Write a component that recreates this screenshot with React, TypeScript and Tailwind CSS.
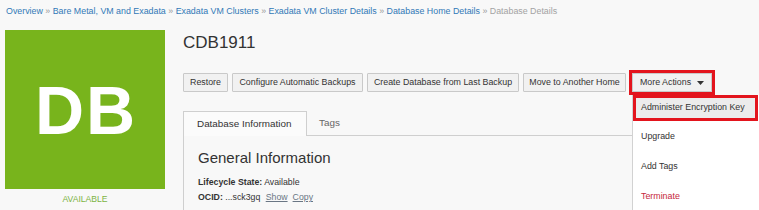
import React from 'react'

const crumbs = ['Overview', 'Bare Metal, VM and Exadata', 'Exadata VM Clusters', 'Exadata VM Cluster Details', 'Database Home Details']

const actions = [
  { label: 'Restore', w: 'w-[45px]' },
  { label: 'Configure Automatic Backups', w: 'w-[131px]' },
  { label: 'Create Database from Last Backup', w: 'w-[152px]' },
  { label: 'Move to Another Home', w: 'w-[103px]' },
]

export default function App() {
  return (
    <div className="w-[759px] h-[210px] overflow-hidden bg-[#f8f8f8] text-[#333] font-['Liberation_Sans',Arial,sans-serif]">
      {/* Breadcrumb */}
      <div className="pt-[4px] pl-[6px] text-[8.85px] leading-[14px] whitespace-nowrap">
        {crumbs.map((c) => (
          <span key={c}>
            <span className="text-[#3279b7]">{c}</span>
            <span className="text-[#9a9a9a]"> » </span>
          </span>
        ))}
        <span className="text-[#a3a3a3]">Database Details</span>
      </div>

      <div className="flex mt-[12px]">
        {/* Status tile */}
        <div className="ml-[5px] w-[160px] shrink-0">
          <div className="h-[159px] bg-[#78b41c] flex items-center justify-center">
            <span className="text-white font-bold text-[68px] leading-none tracking-[2px] pl-[2px]">DB</span>
          </div>
          <div className="mt-[4px] text-center text-[8.6px] leading-[12px] text-[#7cb443]">AVAILABLE</div>
        </div>

        {/* Details */}
        <div className="ml-[18px] flex-1">
          <h1 className="mt-[3px] text-[17px] leading-[20px] text-[#333]">CDB1911</h1>

          <div className="mt-[20px] flex items-center">
            {actions.map((a) => (
              <button
                key={a.label}
                className={`${a.w} h-[19px] mr-[4px] bg-[#f1f1f1] border border-[#c9c9c9] rounded-[1px] text-[8.85px] leading-[17px] text-[#333] whitespace-nowrap`}>
                {a.label}
              </button>
            ))}
            <div className="relative ml-[2px]">
              <button className="w-[80px] h-[19px] bg-[#f1f1f1] border border-[#c9c9c9] outline-[3px] outline-solid outline-[#e3141d] text-[8.85px] leading-[17px] text-[#333] flex items-center justify-center gap-[6px] whitespace-nowrap">
                More Actions
                <svg width="7" height="4" viewBox="0 0 7 4">
                  <polygon points="0,0 7,0 3.5,4" fill="#333" />
                </svg>
              </button>

              {/* Dropdown menu */}
              <div className="absolute left-0 top-[22px] w-[140px] bg-white border-l border-[#d2d2d2] text-[8.85px] z-10">
                <div className="w-[125px] h-[26px] bg-[#ececec] border-[3px] border-[#e3141d] pl-[5px] flex items-center whitespace-nowrap">
                  Administer Encryption Key
                </div>
                <div className="pt-[1px]">
                  <div className="h-[30px] pl-[8px] flex items-center">Upgrade</div>
                  <div className="h-[30px] pl-[8px] flex items-center">Add Tags</div>
                  <div className="h-[30px] pl-[8px] flex items-center text-[#c6283c]">Terminate</div>
                </div>
              </div>
            </div>
          </div>

          {/* Tabs */}
          <div className="mt-[19px] flex border-b border-[#cfcfcf] h-[25px]">
            <div className="w-[124px] h-[25px] border border-b-0 border-[#cfcfcf] bg-[#fbfbfb] pl-[13px] flex items-center text-[9.9px] whitespace-nowrap">
              Database Information
            </div>
            <div className="pl-[12px] flex items-center text-[9.9px] text-[#666]">Tags</div>
          </div>

          <div className="border-l border-[#cfcfcf] pl-[14px] pt-[13px] h-[80px]">
            <h2 className="text-[15px] leading-[18px] text-[#333]">General Information</h2>
            <div className="mt-[8px] text-[8.75px] leading-[15px]">
              <span className="font-bold">Lifecycle State:</span> Available
            </div>
            <div className="text-[8.75px] leading-[15px]">
              <span className="font-bold">OCID:</span> ...sck3gq{' '}
              <a className="ml-[3px] underline text-[#6a7684]">Show</a>
              <a className="ml-[5px] underline text-[#6a7684]">Copy</a>
            </div>
          </div>
        </div>
      </div>
    </div>
  )
}
